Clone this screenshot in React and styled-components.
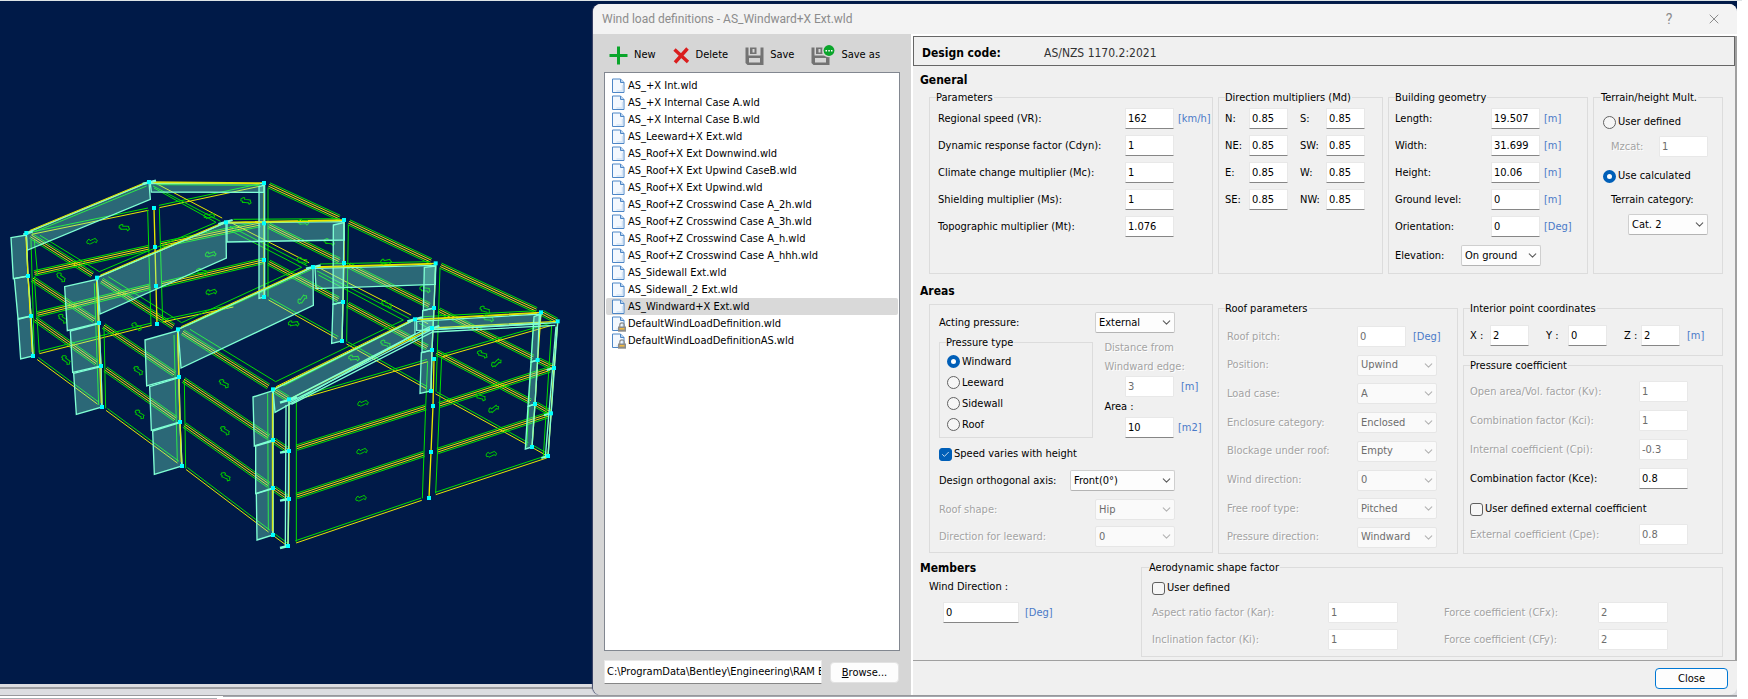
import React, { useId } from "react";
import styled, { createGlobalStyle, css } from "styled-components";
import { Check, ChevronDown, X } from "lucide-react";

const GlobalStyle = createGlobalStyle`
  *, *::before, *::after { box-sizing: border-box; }
  body {
    margin: 0;
    background: #fff;
    color: #000;
    font-family: "DejaVu Sans Condensed", Tahoma, "DejaVu Sans", sans-serif;
    font-size: 11px;
    line-height: 14px;
  }
  button, input, select { font: inherit; color: inherit; margin: 0; }
`;

/* ---------- desktop ---------- */

const Desktop = styled.div`
  display: flex;
  flex-direction: column;
  min-height: 100vh;
`;

const TopEdge = styled.div`
  height: 1px;
  margin-right: 6px;
  background: #dde4e6;
`;

const Workspace = styled.div`
  flex: 1;
  display: grid;
  grid-template-columns: minmax(0, 593fr) minmax(0, 1144fr);
  margin-right: 11px;
  background: linear-gradient(to top, #dcdde1 11px, #001a48 11px);
`;

const SceneColumn = styled.div`
  display: flex;
  flex-direction: column;
`;

const Viewport = styled.div`
  flex: 1;
  background: #001a48;
  overflow: hidden;
`;

const Model = styled.svg`
  display: block;
  width: 100%;
`;

const StatusStrip = styled.div`
  height: 11px;
  padding-top: 3px;
  background: #dcdde1;

  &::before {
    content: "";
    display: block;
    height: 2px;
    background: #9b9ca0;
  }
`;

const TaskEdge = styled.div`
  height: 4px;
  margin-right: 11px;
  border-top: 1px solid #97989c;
  background: #fff;
  display: flex;
  gap: 6px;

  &::before {
    content: "";
    width: 217px;
    height: 3px;
    border-bottom: 1px solid #a9adb3;
  }

  &::after {
    content: "";
    flex: 1;
    height: 1px;
    background: #a3a7ad;
  }
`;

/* ---------- dialog ---------- */

const Dialog = styled.section`
  display: flex;
  flex-direction: column;
  margin-top: 3px;
  border-radius: 8px;
  overflow: hidden;
  background: #f0f0f0;
  box-shadow: -1px 0 1px #40486a;
`;

const TitleBar = styled.header`
  display: flex;
  align-items: center;
  height: 30px;
  padding: 0 8px 0 9px;
  background: #f3f3f3;
  color: #8c8c8c;
`;

const DialogTitle = styled.h1`
  flex: 1;
  margin: 0;
  font: 400 12px/16px Roboto, "Segoe UI", sans-serif;
`;

const CaptionButton = styled.button`
  display: flex;
  align-items: center;
  justify-content: center;
  width: 30px;
  height: 30px;
  margin-left: 15px;
  padding: 0;
  border: 0;
  background: none;
  font: 400 14px/16px Roboto, sans-serif;
`;

const DialogBody = styled.div`
  flex: 1;
  display: grid;
  grid-template-columns: minmax(0, 318fr) minmax(0, 826fr);
`;

const FilePanel = styled.aside`
  display: flex;
  flex-direction: column;
  padding: 0 11px 11px;
  background: #d6d6d6;
`;

const Toolbar = styled.div`
  display: flex;
  align-items: center;
  gap: 17px;
  height: 38px;
  padding: 4px 4px 0 5px;
`;

const ToolButton = styled.button`
  display: flex;
  align-items: center;
  gap: 6px;
  padding: 0;
  border: 0;
  background: none;
  white-space: nowrap;
`;

const FileList = styled.ul`
  flex: 1;
  margin: 0;
  padding: 4px 1px;
  list-style: none;
  border: 1px solid #828790;
  background: #fff;
`;

const FileItem = styled.li`
  display: flex;
  align-items: center;
  gap: 2px;
  height: 17px;
  padding: 1px 0 0 6px;
  border-radius: 2px;
  white-space: nowrap;
  background: ${(p) => (p["aria-selected"] ? "#d9d9d9" : "transparent")};
`;

const PathRow = styled.div`
  display: flex;
  align-items: center;
  gap: 8px;
  margin-top: 9px;
  padding-right: 1px;
`;

const PushButton = styled.button`
  width: ${(p) => (p.$primary ? 73 : 69)}px;
  height: 21px;
  padding: 1px 0 0;
  border: 1px solid ${(p) => (p.$primary ? "#0078d4" : "#e2e2e2")};
  border-radius: 4px;
  background: #fdfdfd;
`;

const SettingsPanel = styled.main`
  display: flex;
  flex-direction: column;
  border-top: 2px solid #fff;
  border-left: 2px solid #fff;
  background: #f0f0f0;
`;

const Settings = styled.div`
  flex: 1;
  padding-bottom: 3px;
  border-right: 2px solid #a0a0a0;
  border-bottom: 1px solid #a0a0a0;
`;

const CodeBar = styled.div`
  display: flex;
  align-items: center;
  height: 30px;
  padding: 3px 0 0 8px;
  border: 1px solid #666;
  font-size: 12px;

  strong { width: 122px; }
  span { color: #333; }
`;

const Footer = styled.footer`
  display: flex;
  justify-content: flex-end;
  padding: 7px 9px 6px;
`;

const Heading = styled.h2`
  margin: ${(p) => (p.$first ? 6 : p.$flush ? 0 : 9)}px 0 2px ${(p) => (p.$flush ? 0 : 7)}px;
  font-size: 12px;
  line-height: 16px;
`;

const Columns = styled.div`
  display: grid;
  grid-template-columns: ${(p) => p.$template};
  gap: 5px;
  margin: 0 12px 0 16px;
`;

/* ---------- groups ---------- */

const Group = styled.fieldset`
  display: flex;
  flex-direction: column;
  gap: ${(p) => p.$gap ?? 6}px;
  min-width: 0;
  margin: 0;
  padding: ${(p) => p.$pad ?? "4px 0 7px 6px"};
  border: 1px solid #dcdcdc;
  ${(p) => p.$grow && "flex: 1;"}
  ${(p) => p.$spread && "justify-content: space-between;"}

  > legend {
    margin-left: ${(p) => p.$legend ?? 0}px;
    padding: 0 1px 0 0;
    height: 14px;
    line-height: 16px;
    white-space: nowrap;
  }
`;

const PlainGroup = styled.div`
  display: flex;
  flex-direction: column;
  margin: 3px 0 1px;
  padding: 7px 0 4px 9px;
  border: 1px solid #dcdcdc;
`;

const Stack = styled.div`
  display: flex;
  flex-direction: column;
  gap: ${(p) => p.$gap ?? 0}px;
  padding-top: ${(p) => p.$top ?? 0}px;
`;

const Pairs = styled.div`
  display: grid;
  grid-template-columns: ${(p) => p.$template};
  gap: 6px ${(p) => p.$between}px;
  padding-right: ${(p) => p.$right}px;
`;

const SplitRow = styled.div`
  display: grid;
  grid-template-columns: minmax(0, 155fr) minmax(0, 108fr);
  gap: 11px;
  margin-top: 2px;
`;

const Coordinates = styled.div`
  display: flex;
  align-items: center;
  gap: 17px;
`;

/* ---------- controls ---------- */

const disabledText = css`
  color: #a3a3a3;
  text-shadow: 1px 1px 0 #fff;
`;

const Row = styled.div`
  display: flex;
  align-items: center;
  height: 21px;
  margin-top: ${(p) => p.$before ?? 0}px;
  margin-left: ${(p) => p.$indent ?? 0}px;
`;

const Caption = styled.label`
  ${(p) => (p.$width ? `width: ${p.$width}px;` : "flex: 1;")}
  white-space: nowrap;
  ${(p) => p.$off && disabledText}
`;

const Note = styled.div`
  height: ${(p) => p.$height}px;
  line-height: ${(p) => p.$height}px;
  white-space: nowrap;
  ${(p) => p.$off && disabledText}
`;

const TextBox = styled.input`
  width: ${(p) => p.$width ?? 49}px;
  height: ${(p) => p.$height ?? 21}px;
  min-width: 0;
  ${(p) => p.$fill && "flex: 1;"}
  padding: 0 0 1px 2px;
  border: 1px solid #e8e8e8;
  border-bottom-color: #868686;
  border-radius: 1px;
  background: #fff;

  &:disabled {
    border-bottom-color: #e8e8e8;
    color: #6d6d6d;
  }
`;

const Unit = styled.span`
  width: ${(p) => p.$width}px;
  padding-left: ${(p) => p.$gap ?? 4}px;
  color: #4a7ac8;
  white-space: nowrap;
`;

const SelectFrame = styled.span`
  display: grid;
  width: ${(p) => p.$width ?? 80}px;
  height: 21px;

  > * { grid-area: 1 / 1; }
  > svg {
    align-self: center;
    justify-self: end;
    margin-right: 2px;
    color: ${(p) => (p.$off ? "#b4b4b4" : "#5c5c5c")};
    pointer-events: none;
  }
`;

const NativeSelect = styled.select`
  appearance: none;
  width: 100%;
  padding: 0 16px 0 3px;
  border: 1px solid #cfcfcf;
  border-bottom-color: #b4b4b4;
  border-radius: 2px;
  background: #fdfdfd;

  &:disabled {
    border-color: #e6e6e6;
    background: #fafafa;
    color: #6d6d6d;
    opacity: 1;
  }
`;

const ChoiceLabel = styled.label`
  display: flex;
  align-items: center;
  gap: 2px;
  height: ${(p) => p.$height ?? 21}px;
  margin-top: ${(p) => p.$before ?? 0}px;
  white-space: nowrap;
`;

const RadioInput = styled.input`
  appearance: none;
  width: 13px;
  height: 13px;
  border: 1px solid #626262;
  border-radius: 50%;
  background: #f6f6f6;

  &:checked {
    border: 4px solid #005fb8;
    background: #fff;
  }
`;

const TickFrame = styled.span`
  display: grid;
  place-items: center;
  width: 13px;
  height: 13px;

  > * { grid-area: 1 / 1; }
  > svg { color: #fff; pointer-events: none; }
`;

const TickInput = styled.input`
  appearance: none;
  width: 13px;
  height: 13px;
  border: 1px solid #5f5f5f;
  border-radius: 3px;
  background: #f6f6f6;

  &:checked {
    border-color: #005fb8;
    background: #005fb8;
  }
`;

function Field({ label, value, unit, trail, unitGap, off, width, height, labelWidth, fill, indent, before, name }) {
  const id = useId();
  return (
    <Row $indent={indent} $before={before}>
      <Caption htmlFor={id} $off={off} $width={labelWidth}>{label}</Caption>
      <TextBox id={id} aria-label={name} defaultValue={value} disabled={off} $width={width} $height={height} $fill={fill} />
      {trail ? <Unit $width={trail} $gap={unitGap}>{unit}</Unit> : null}
    </Row>
  );
}

function Dropdown({ id, value, off, width }) {
  return (
    <SelectFrame $width={width} $off={off}>
      <NativeSelect id={id} disabled={off} defaultValue={value}>
        <option>{value}</option>
      </NativeSelect>
      <ChevronDown size={13} strokeWidth={2} />
    </SelectFrame>
  );
}

function Choice({ label, value, off, width, trail, before }) {
  const id = useId();
  return (
    <Row $before={before}>
      <Caption htmlFor={id} $off={off}>{label}</Caption>
      <Dropdown id={id} value={value} off={off} width={width} />
      <Unit $width={trail} />
    </Row>
  );
}

function Radio({ name, label, checked, height, before }) {
  return (
    <ChoiceLabel $height={height} $before={before}>
      <RadioInput type="radio" name={name} defaultChecked={checked} />
      {label}
    </ChoiceLabel>
  );
}

function Tick({ label, checked, before }) {
  return (
    <ChoiceLabel $height={14} $before={before}>
      <TickFrame>
        <TickInput type="checkbox" defaultChecked={checked} />
        {checked ? <Check size={9} strokeWidth={2} /> : null}
      </TickFrame>
      {label}
    </ChoiceLabel>
  );
}

/* ---------- icons ---------- */

const PlusIcon = () => (
  <svg width="19" height="19" viewBox="0 0 19 19">
    <path d="M8 0.5h3v7.500h7.500v3H11v7.500H8V11H0.500V8H8z" fill="#0aa52b" />
  </svg>
);

const CrossIcon = () => (
  <svg width="17" height="17" viewBox="0 0 17 17">
    <path d="M1.500 2.500L15 15M14.500 1.500L2 15.500" stroke="#da1e1e" strokeWidth="3.400" />
  </svg>
);

const FloppyIcon = ({ more }) => (
  <svg width={more ? 24 : 19} height="21" viewBox={more ? "0 0 24 21" : "0 0 19 21"}>
    <path
      fillRule="evenodd"
      fill="#737373"
      d="M0.500 2.500h3v8h12v-8h3v17.500h-16l-2-2zM4 13v4.500h11V13z"
    />
    <path fillRule="evenodd" fill="#737373" d="M5 2.500h6.500v6.500H5zM7.500 4v3.500h2V4z" />
    {more ? (
      <g>
        <circle cx="17.500" cy="6" r="6.200" fill="#d6d6d6" />
        <circle cx="18" cy="5.500" r="5.400" fill="#0aa52b" />
        <path d="M14.500 5h1.500v1.500h-1.500zM17.300 5h1.500v1.500h-1.500zM20 5h1.500v1.500H20z" fill="#fff" />
      </g>
    ) : null}
  </svg>
);

const FileIcon = ({ locked }) => (
  <svg width="14" height="16" viewBox="0 0 14 16">
    <path d="M0.500 1h8l3.500 3.500V14.500H0.500z" fill="#f3f8fe" stroke="#4d86c6" />
    <path d="M8.500 1v3.500H12" fill="#b9d4f0" stroke="#4d86c6" />
    <path d="M10.500 7v6h-6" fill="none" stroke="#d5e5f6" strokeWidth="1.500" />
    {locked ? (
      <g>
        <path d="M7.800 11V9a2.200 2.200 0 0 1 4.400 0v2" fill="none" stroke="#8b8b8b" strokeWidth="1.200" />
        <rect x="6" y="10.500" width="8" height="5.200" fill="#8b8b8b" />
        <rect x="7.500" y="12" width="5" height="1.600" fill="#f0b840" />
      </g>
    ) : null}
  </svg>
);

/* ---------- structural model ---------- */

const NODE = "#00ffff";
const STEEL = "#e8e800";
const SHEET = "#00e000";
const LOAD = "#7fffd4";

/* nodes of each portal frame: left column, ridge, right column */
const frames = [
  { left: [[79, 219], [84, 348], [93, 468], [99, 588]], ridge: [447, 66], right: [[792, 69], [792, 190], [792, 300], [792, 411]] },
  { left: [[291, 353], [297, 489], [303, 618], [306, 741]], ridge: [678, 187], right: [[1032, 180], [1032, 309], [1029, 426], [1026, 543]] },
  { left: [[534, 508], [537, 651], [540, 786], [546, 918]], ridge: [939, 321], right: [[1307, 310], [1302, 444], [1296, 570], [1293, 693]] },
  { left: [[819, 688], [819, 840], [819, 984], [819, 1125]], ridge: [1245, 478], right: [[1623, 457], [1613, 600], [1605, 732], [1596, 861]] },
  { left: [[867, 718], [867, 873], [867, 1017], [864, 1158]], ridge: [1296, 504], right: [[1673, 484], [1662, 624], [1653, 760], [1644, 888]] },
];

const posts = [
  [[462, 144], [465, 261], [468, 378], [471, 492]],
  [[1302, 597], [1299, 738], [1293, 876], [1287, 1014]],
];

const endGirts = [
  [95, 222, 445, 150], [103, 340, 447, 264], [112, 463, 450, 380], [118, 580, 455, 495],
  [478, 142, 778, 78], [482, 254, 780, 192], [485, 374, 792, 302], [488, 485, 700, 440],
  [905, 714, 1283, 604], [890, 863, 1277, 742], [890, 1008, 1272, 882], [888, 1148, 1265, 1020],
  [1325, 590, 1655, 495], [1318, 735, 1650, 628], [1313, 873, 1645, 765], [1307, 1003, 1640, 893],
];

const sheetEdges = [
  "M120 226L298 335L648 187L462 84", "M325 350L545 488L905 322L692 212", "M570 508L827 665L1210 480L955 345",
  "M93 240L103 585M103 240L113 345M103 350L118 580M443 150L453 495M478 145L488 485",
  "M312 500L317 745M553 660L557 925M283 370L296 735M522 525L532 905M803 700L805 1110",
  "M889 725V1145M1283 605L1277 740L1267 1015M1325 590L1307 1000M1655 495L1630 890",
  "M804 85V410M1045 195L1040 545M1320 325L1308 695M1600 480L1580 860",
  "M105 215L440 78M320 342L672 190M560 498L935 328M850 678L1240 482M470 74L780 76M700 178L1020 176M960 312L1290 305M1270 470L1610 452",
];

const loadPanels = [
  "33,233 79,225 84,348 40,356", "43,356 84,348 93,468 54,476", "54,478 93,468 99,588 62,597",
  "194,380 291,358 297,489 202,512", "211,513 297,491 303,618 218,637", "221,640 303,620 306,741 229,763",
  "435,540 534,512 537,651 440,678", "449,680 537,653 540,786 454,811", "458,813 540,788 546,918 463,943",
  "759,711 819,692 819,840 763,858", "767,858 819,843 819,984 767,1001", "769,1001 819,986 819,1125 771,1140",
  "79,219 447,66 451,118 81,271", "451,70 792,71 792,97 454,96",
  "291,353 678,187 679,294 300,462", "681,189 1032,185 1033,240 681,246",
  "534,508 939,321 940,436 543,624", "945,325 1307,316 1306,373 948,386",
  "819,690 1245,478 1245,522 825,757", "1250,484 1623,462 1618,492 1250,512",
  "777,80 794,75 794,411 777,415",
  "1000,195 1032,188 1029,426 999,433", "999,433 1029,426 1026,543 995,550",
  "1273,322 1307,318 1302,444 1270,452", "1268,452 1302,444 1296,570 1266,578", "1264,578 1296,570 1293,693 1260,700",
  "1602,470 1618,464 1613,600 1593,606", "1593,606 1613,600 1605,732 1584,739", "1584,739 1605,732 1596,861 1576,867",
];

const arrows = [
  [276, 244, 0], [373, 203, 25], [738, 123, 30], [628, 168, 10], [632, 283, 5], [634, 396, 5], [605, 335, 30],
  [183, 352, 60], [188, 476, 60], [198, 600, 60], [410, 500, 45], [415, 632, 55], [419, 763, 55],
  [672, 671, 50], [675, 812, 55], [677, 950, 50], [881, 491, 15], [907, 302, 30], [907, 418, -30], [910, 187, 20],
  [988, 246, 30], [1158, 305, 10], [1160, 433, 40], [1062, 594, 20], [1157, 552, 40], [1275, 388, 30],
  [1089, 730, 0], [1086, 874, 0], [1083, 1015, 0], [1447, 583, 40], [1489, 609, -20], [1442, 711, 40],
  [1481, 747, -15], [1474, 883, 0], [1455, 450, 40], [1465, 475, 30],
];

function offsetLine([x1, y1], [x2, y2], distance, trim) {
  const length = Math.hypot(x2 - x1, y2 - y1);
  const ux = (x2 - x1) / length;
  const uy = (y2 - y1) / length;
  return {
    x1: x1 + ux * trim - uy * distance,
    y1: y1 + uy * trim + ux * distance,
    x2: x2 - ux * trim - uy * distance,
    y2: y2 - uy * trim + ux * distance,
  };
}

function Girt({ from, to, single, trim = 16 }) {
  return (
    <g strokeWidth="3">
      <line {...offsetLine(from, to, single ? 1 : 3, trim)} stroke={STEEL} />
      {single ? null : <line {...offsetLine(from, to, -3, trim)} stroke={STEEL} />}
      {single ? null : <line {...offsetLine(from, to, 8, trim)} stroke={SHEET} />}
      <line {...offsetLine(from, to, single ? -6 : -8, trim)} stroke={SHEET} />
    </g>
  );
}

const bays = [0, 1, 2, 3];

function StructureModel() {
  return (
    <Model viewBox="0 -477 1779 2049" role="img" aria-label="Building frame with wind loads">
      {bays.map((i) =>
        bays.map((level) => (
          <g key={`${i}-${level}`}>
            <Girt from={frames[i].left[level]} to={frames[i + 1].left[level]} single={level === 3} trim={i === 3 ? 4 : 16} />
            <Girt from={frames[i].right[level]} to={frames[i + 1].right[level]} single={level === 3} trim={i === 3 ? 4 : 16} />
          </g>
        ))
      )}
      {endGirts.map(([x1, y1, x2, y2], i) => (
        <Girt key={i} from={[x1, y1]} to={[x2, y2]} single={i % 4 === 0 || i % 4 === 3} trim={0} />
      ))}
      {bays.map((i) => (
        <g key={i} stroke={STEEL} strokeWidth="3">
          <line {...offsetLine(frames[i].ridge, frames[i + 1].ridge, -6, 16)} />
          <line {...offsetLine(frames[i].ridge, frames[i + 1].ridge, 5, 16)} stroke={SHEET} />
        </g>
      ))}
      <g fill="none" stroke={SHEET} strokeWidth="3">
        {sheetEdges.map((d) => <path key={d} d={d} />)}
      </g>
      <g fill="none" stroke={STEEL} strokeWidth="4">
        {frames.map(({ left, ridge, right }, i) => (
          <path key={i} d={`M${[...left].reverse().map((p) => p.join(" ")).join("L")}L${ridge.join(" ")}L${right.map((p) => p.join(" ")).join("L")}`} />
        ))}
        {posts.map((post, i) => <path key={i} d={`M${post.map((p) => p.join(" ")).join("L")}`} />)}
      </g>
      <g fill="none" stroke="#00c800" strokeWidth="3">
        {arrows.map(([x, y, turn]) => (
          <path
            key={`${x}-${y}`}
            transform={`translate(${x} ${y}) rotate(${turn})`}
            d="M-16 2L-12 -5L-8 -6L-6 -2L5 -7L10 -9L11 -6L16 -3L13 4L8 1L5 3L-4 7L-7 9L-9 6L-14 7Z"
          />
        ))}
      </g>
      <g fill="#7fffd4" fillOpacity="0.34" stroke={LOAD} strokeWidth="4">
        {loadPanels.map((points) => <polygon key={points} points={points} />)}
      </g>
      <g fill="none" stroke={STEEL} strokeWidth="3">
        {frames.slice(0, 4).map(({ left, ridge, right }, i) => (
          <g key={i}>
            <line {...offsetLine(left[0], ridge, -3, 12)} />
            <line {...offsetLine(left[0], left[3], 2, 12)} />
            <line {...offsetLine(ridge, right[0], 2, 12)} />
          </g>
        ))}
      </g>
      <g fill="none" stroke={LOAD} strokeWidth="4">
        <path d="M858 735L856 1162M867 725L864 1158M1673 490L1644 890M1668 500L1636 892" />
        <path d="M870 726L1296 508L1670 488M874 733L1298 516L1666 496M868 718L1290 500" />
        <path d="M840 728L892 712M840 878L867 873M840 1022L867 1017M840 1164L864 1158" strokeWidth="7" />
        <path d="M428 72L468 62M655 192L698 180M918 326L962 316M1222 484L1266 472M1276 512L1318 498M70 224L98 214" strokeWidth="7" />
        <path d="M1640 630L1662 624M1632 766L1653 760M1624 894L1644 888" strokeWidth="6" />
      </g>
      <g fill={NODE}>
        {[...frames.flatMap(({ left, ridge, right }) => [...left, ridge, ...right]), ...posts.flat()].map(([x, y]) => (
          <rect key={`${x}-${y}`} x={x - 6} y={y - 6} width="12" height="12" />
        ))}
      </g>
    </Model>
  );
}

/* ---------- content ---------- */

const files = [
  "AS_+X Int.wld", "AS_+X Internal Case A.wld", "AS_+X Internal Case B.wld", "AS_Leeward+X Ext.wld",
  "AS_Roof+X Ext Downwind.wld", "AS_Roof+X Ext Upwind CaseB.wld", "AS_Roof+X Ext Upwind.wld",
  "AS_Roof+Z Crosswind Case A_2h.wld", "AS_Roof+Z Crosswind Case A_3h.wld", "AS_Roof+Z Crosswind Case A_h.wld",
  "AS_Roof+Z Crosswind Case A_hhh.wld", "AS_Sidewall Ext.wld", "AS_Sidewall_2 Ext.wld", "AS_Windward+X Ext.wld",
  "DefaultWindLoadDefinition.wld", "DefaultWindLoadDefinitionAS.wld",
];

const parameters = [
  ["Regional speed (VR):", "162", "[km/h]"],
  ["Dynamic response factor (Cdyn):", "1"],
  ["Climate change multiplier (Mc):", "1"],
  ["Shielding multiplier (Ms):", "1"],
  ["Topographic multiplier (Mt):", "1.076"],
];

const directions = ["N:", "S:", "NE:", "SW:", "E:", "W:", "SE:", "NW:"];

const geometry = [
  ["Length:", "19.507", "[m]"],
  ["Width:", "31.699", "[m]"],
  ["Height:", "10.06", "[m]"],
  ["Ground level:", "0", "[m]"],
  ["Orientation:", "0", "[Deg]"],
];

const roofChoices = [
  ["Position:", "Upwind"],
  ["Load case:", "A"],
  ["Enclosure category:", "Enclosed"],
  ["Blockage under roof:", "Empty"],
  ["Wind direction:", "0"],
  ["Free roof type:", "Pitched"],
  ["Pressure direction:", "Windward"],
];

function Files() {
  return (
    <FilePanel>
      <Toolbar>
        <ToolButton type="button"><PlusIcon />New</ToolButton>
        <ToolButton type="button"><CrossIcon />Delete</ToolButton>
        <ToolButton type="button"><FloppyIcon />Save</ToolButton>
        <ToolButton type="button"><FloppyIcon more />Save as</ToolButton>
      </Toolbar>
      <FileList role="listbox" aria-label="Wind load definitions">
        {files.map((name) => (
          <FileItem key={name} role="option" aria-selected={name === "AS_Windward+X Ext.wld"}>
            <FileIcon locked={name.startsWith("Default")} />
            {name}
          </FileItem>
        ))}
      </FileList>
      <PathRow>
        <TextBox aria-label="Folder" $fill $height={24} defaultValue="C:\ProgramData\Bentley\Engineering\RAM Elements" />
        <PushButton type="button"><u>B</u>rowse...</PushButton>
      </PathRow>
    </FilePanel>
  );
}

function General() {
  return (
    <Columns $template="minmax(0, 284fr) minmax(0, 165fr) minmax(0, 200fr) minmax(0, 130fr)">
      <Group $pad="4px 0 7px 8px" $legend={-2}>
        <legend>Parameters</legend>
        {parameters.map(([label, value, unit]) => (
          <Field key={label} label={label} value={value} unit={unit} trail={38} />
        ))}
      </Group>
      <Group>
        <legend>Direction multipliers (Md)</legend>
        <Pairs $template="minmax(0, 63fr) minmax(0, 65fr)" $between={12} $right={17}>
          {directions.map((label, i) => (
            <Field key={label} label={label} value="0.85" labelWidth={i % 2 ? 26 : 24} fill />
          ))}
        </Pairs>
      </Group>
      <Group>
        <legend>Building geometry</legend>
        {geometry.map(([label, value, unit]) => (
          <Field key={label} label={label} value={value} unit={unit} trail={47} />
        ))}
        <Choice label="Elevation:" value="On ground" trail={46} before={2} />
      </Group>
      <Group $pad="8px 14px 6px 9px" $legend={-2} $gap={4}>
        <legend>Terrain/height Mult.</legend>
        <Radio name="terrain" label="User defined" height={20} />
        <Field label="Mzcat:" value="1" off indent={8} />
        <Radio name="terrain" label="Use calculated" height={20} checked before={5} />
        <Terrain />
      </Group>
    </Columns>
  );
}

const TerrainCategory = styled.div`
  display: flex;
  flex-direction: column;
  gap: 4px;
  padding-left: 8px;

  > label { line-height: 20px; }
  > span { align-self: flex-end; }
`;

function Terrain() {
  const id = useId();
  return (
    <TerrainCategory>
      <label htmlFor={id}>Terrain category:</label>
      <Dropdown id={id} value="Cat. 2" />
    </TerrainCategory>
  );
}

const RoofRow = styled.div`
  display: grid;
  grid-template-columns: minmax(0, 1fr) 100px;
  align-items: center;
  height: 21px;
`;

const RoofControl = styled.div`
  display: flex;
  align-items: center;
`;

function RoofParameters() {
  const base = useId();
  return (
    <Group $pad="11px 0 5px 8px" $legend={-2} $gap={7} $spread>
      <legend>Roof parameters</legend>
      <RoofRow>
        <Caption htmlFor={base} $off>Roof pitch:</Caption>
        <RoofControl>
          <TextBox id={base} defaultValue="0" disabled />
          <Unit $width={51} $gap={7}>[Deg]</Unit>
        </RoofControl>
      </RoofRow>
      {roofChoices.map(([label, value], i) => (
        <RoofRow key={label}>
          <Caption htmlFor={base + i} $off>{label}</Caption>
          <RoofControl><Dropdown id={base + i} value={value} off /></RoofControl>
        </RoofRow>
      ))}
    </Group>
  );
}

function Areas() {
  return (
    <Columns $template="minmax(0, 284fr) minmax(0, 240fr) minmax(0, 260fr)">
      <PlainGroup>
        <Choice label="Acting pressure:" value="External" trail={37} />
        <SplitRow>
          <Group $pad="2px 0 2px 7px" $legend={-1} $gap={0}>
            <legend>Pressure type</legend>
            <Radio name="pressure" label="Windward" checked />
            <Radio name="pressure" label="Leeward" />
            <Radio name="pressure" label="Sidewall" />
            <Radio name="pressure" label="Roof" />
          </Group>
          <Stack $top={3}>
            <Note $height={19} $off>Distance from</Note>
            <Note $height={19} $off>Windward edge:</Note>
            <Field name="Distance from Windward edge" value="3" unit="[m]" trail={38} unitGap={7} off />
            <Note $height={20}>Area :</Note>
            <Field name="Area" value="10" unit="[m2]" trail={38} />
          </Stack>
        </SplitRow>
        <Tick label="Speed varies with height" checked before={9} />
        <Choice label="Design orthogonal axis:" value="Front(0°)" width={105} trail={37} before={9} />
        <Choice label="Roof shape:" value="Hip" off trail={37} before={8} />
        <Choice label="Direction for leeward:" value="0" off trail={37} before={6} />
      </PlainGroup>
      <RoofParameters />
      <Stack $gap={2}>
        <Group $pad="10px 0 9px 6px">
          <legend>Interior point coordinates</legend>
          <Coordinates>
            <Field label="X :" value="2" labelWidth={20} width={39} />
            <Field label="Y :" value="0" labelWidth={22} width={39} />
            <Field label="Z :" value="2" labelWidth={17} width={39} unit="[m]" trail={30} unitGap={7} />
          </Coordinates>
        </Group>
        <Group $pad="9px 0 8px 6px" $gap={8} $grow>
          <legend>Pressure coefficient</legend>
          <Field label="Open area/Vol. factor (Kv):" value="1" trail={34} off />
          <Field label="Combination factor (Kci):" value="1" trail={34} off />
          <Field label="Internal coefficient (Cpi):" value="-0.3" trail={34} off />
          <Field label="Combination factor (Kce):" value="0.8" trail={34} />
          <Tick label="User defined external coefficient" before={5} />
          <Field label="External coefficient (Cpe):" value="0.8" trail={34} off />
        </Group>
      </Stack>
    </Columns>
  );
}

const MembersRow = styled.div`
  display: grid;
  grid-template-columns: minmax(0, 221fr) minmax(0, 582fr);
  margin: 6px 12px 0 7px;
`;

const WindDirection = styled.div`
  display: flex;
  flex-direction: column;
  gap: 8px;
  padding: 2px 0 0 9px;
`;

const WindInput = styled.div`
  display: flex;
  align-items: center;
  padding-left: 14px;
`;

function Members() {
  const id = useId();
  return (
    <MembersRow>
      <div>
        <Heading $flush>Members</Heading>
        <WindDirection>
          <label htmlFor={id}>Wind Direction :</label>
          <WindInput>
            <TextBox id={id} defaultValue="0" $width={76} />
            <Unit $width={50} $gap={6}>[Deg]</Unit>
          </WindInput>
        </WindDirection>
      </div>
      <Group $pad="7px 0 6px 10px" $legend={-3} $gap={7}>
        <legend>Aerodynamic shape factor</legend>
        <Tick label="User defined" />
        <Pairs $template="minmax(0, 246fr) minmax(0, 224fr)" $between={46} $right={54}>
          <Field label="Aspect ratio factor (Kar):" value="1" width={70} off />
          <Field label="Force coefficient (CFx):" value="2" width={70} off />
          <Field label="Inclination factor (Ki):" value="1" width={70} off />
          <Field label="Force coefficient (CFy):" value="2" width={70} off />
        </Pairs>
      </Group>
    </MembersRow>
  );
}

export default function App() {
  return (
    <Desktop>
      <GlobalStyle />
      <TopEdge />
      <Workspace>
        <SceneColumn>
          <Viewport><StructureModel /></Viewport>
          <StatusStrip />
        </SceneColumn>
        <Dialog aria-label="Wind load definitions">
          <TitleBar>
            <DialogTitle>Wind load definitions - AS_Windward+X Ext.wld</DialogTitle>
            <CaptionButton type="button" aria-label="Help">?</CaptionButton>
            <CaptionButton type="button" aria-label="Close window"><X size={16} strokeWidth={1.5} /></CaptionButton>
          </TitleBar>
          <DialogBody>
            <Files />
            <SettingsPanel>
              <Settings>
                <CodeBar><strong>Design code:</strong><span>AS/NZS 1170.2:2021</span></CodeBar>
                <Heading $first>General</Heading>
                <General />
                <Heading>Areas</Heading>
                <Areas />
                <Members />
              </Settings>
              <Footer><PushButton type="button" $primary>Close</PushButton></Footer>
            </SettingsPanel>
          </DialogBody>
        </Dialog>
      </Workspace>
      <TaskEdge />
    </Desktop>
  );
}
